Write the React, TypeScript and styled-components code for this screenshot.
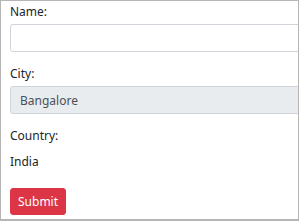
import * as React from 'react';
import styled, { createGlobalStyle } from 'styled-components';

const GlobalStyle = createGlobalStyle`
  html, body {
    margin: 0;
    padding: 0;
    background: #ffffff;
  }
  body {
    font-family: 'Noto Sans', 'Open Sans', sans-serif;
    color: #212529;
  }
`;

const Frame = styled.div`
  box-sizing: border-box;
  width: 299px;
  height: 221px;
  border: 1px solid #b5b5b5;
  border-bottom-width: 2px;
  overflow: hidden;
  padding: 1px 0 0 9px;
`;

const Form = styled.form`
  display: flex;
  flex-direction: column;
  width: 340px;
`;

const Group = styled.div`
  display: flex;
  flex-direction: column;
  margin-bottom: 12px;
`;

const Label = styled.label<{ $gap?: number }>`
  font-size: 12px;
  line-height: 18px;
  padding-top: 1px;
  margin-bottom: ${(p) => p.$gap ?? 3}px;
`;

const Input = styled.input<{ $readOnly?: boolean }>`
  box-sizing: border-box;
  height: 28px;
  padding: 4px 9px;
  font-family: inherit;
  font-size: 12px;
  color: #495057;
  border: 1px solid #ced4da;
  border-radius: 3px;
  background: ${(p) => (p.$readOnly ? '#e9ecef' : '#ffffff')};
  outline: none;
`;

const Value = styled.div`
  font-size: 12px;
  line-height: 18px;
  margin-bottom: 5px;
`;

const SubmitButton = styled.button`
  align-self: flex-start;
  box-sizing: border-box;
  height: 27px;
  padding: 0 7px;
  font-family: inherit;
  font-size: 12px;
  color: #ffffff;
  background: #dc3545;
  border: 1px solid #dc3545;
  border-radius: 3px;
`;

const App: React.FC = () => {
  const [name, setName] = React.useState('');

  return (
    <>
      <GlobalStyle />
      <Frame>
        <Form onSubmit={(e) => e.preventDefault()}>
          <Group>
            <Label htmlFor="name">Name:</Label>
            <Input id="name" value={name} onChange={(e) => setName(e.currentTarget.value)} />
          </Group>
          <Group>
            <Label htmlFor="city">City:</Label>
            <Input id="city" $readOnly readOnly value="Bangalore" />
          </Group>
          <Group>
            <Label $gap={8}>Country:</Label>
            <Value>India</Value>
          </Group>
          <SubmitButton type="submit">Submit</SubmitButton>
        </Form>
      </Frame>
    </>
  );
};

export default App;
